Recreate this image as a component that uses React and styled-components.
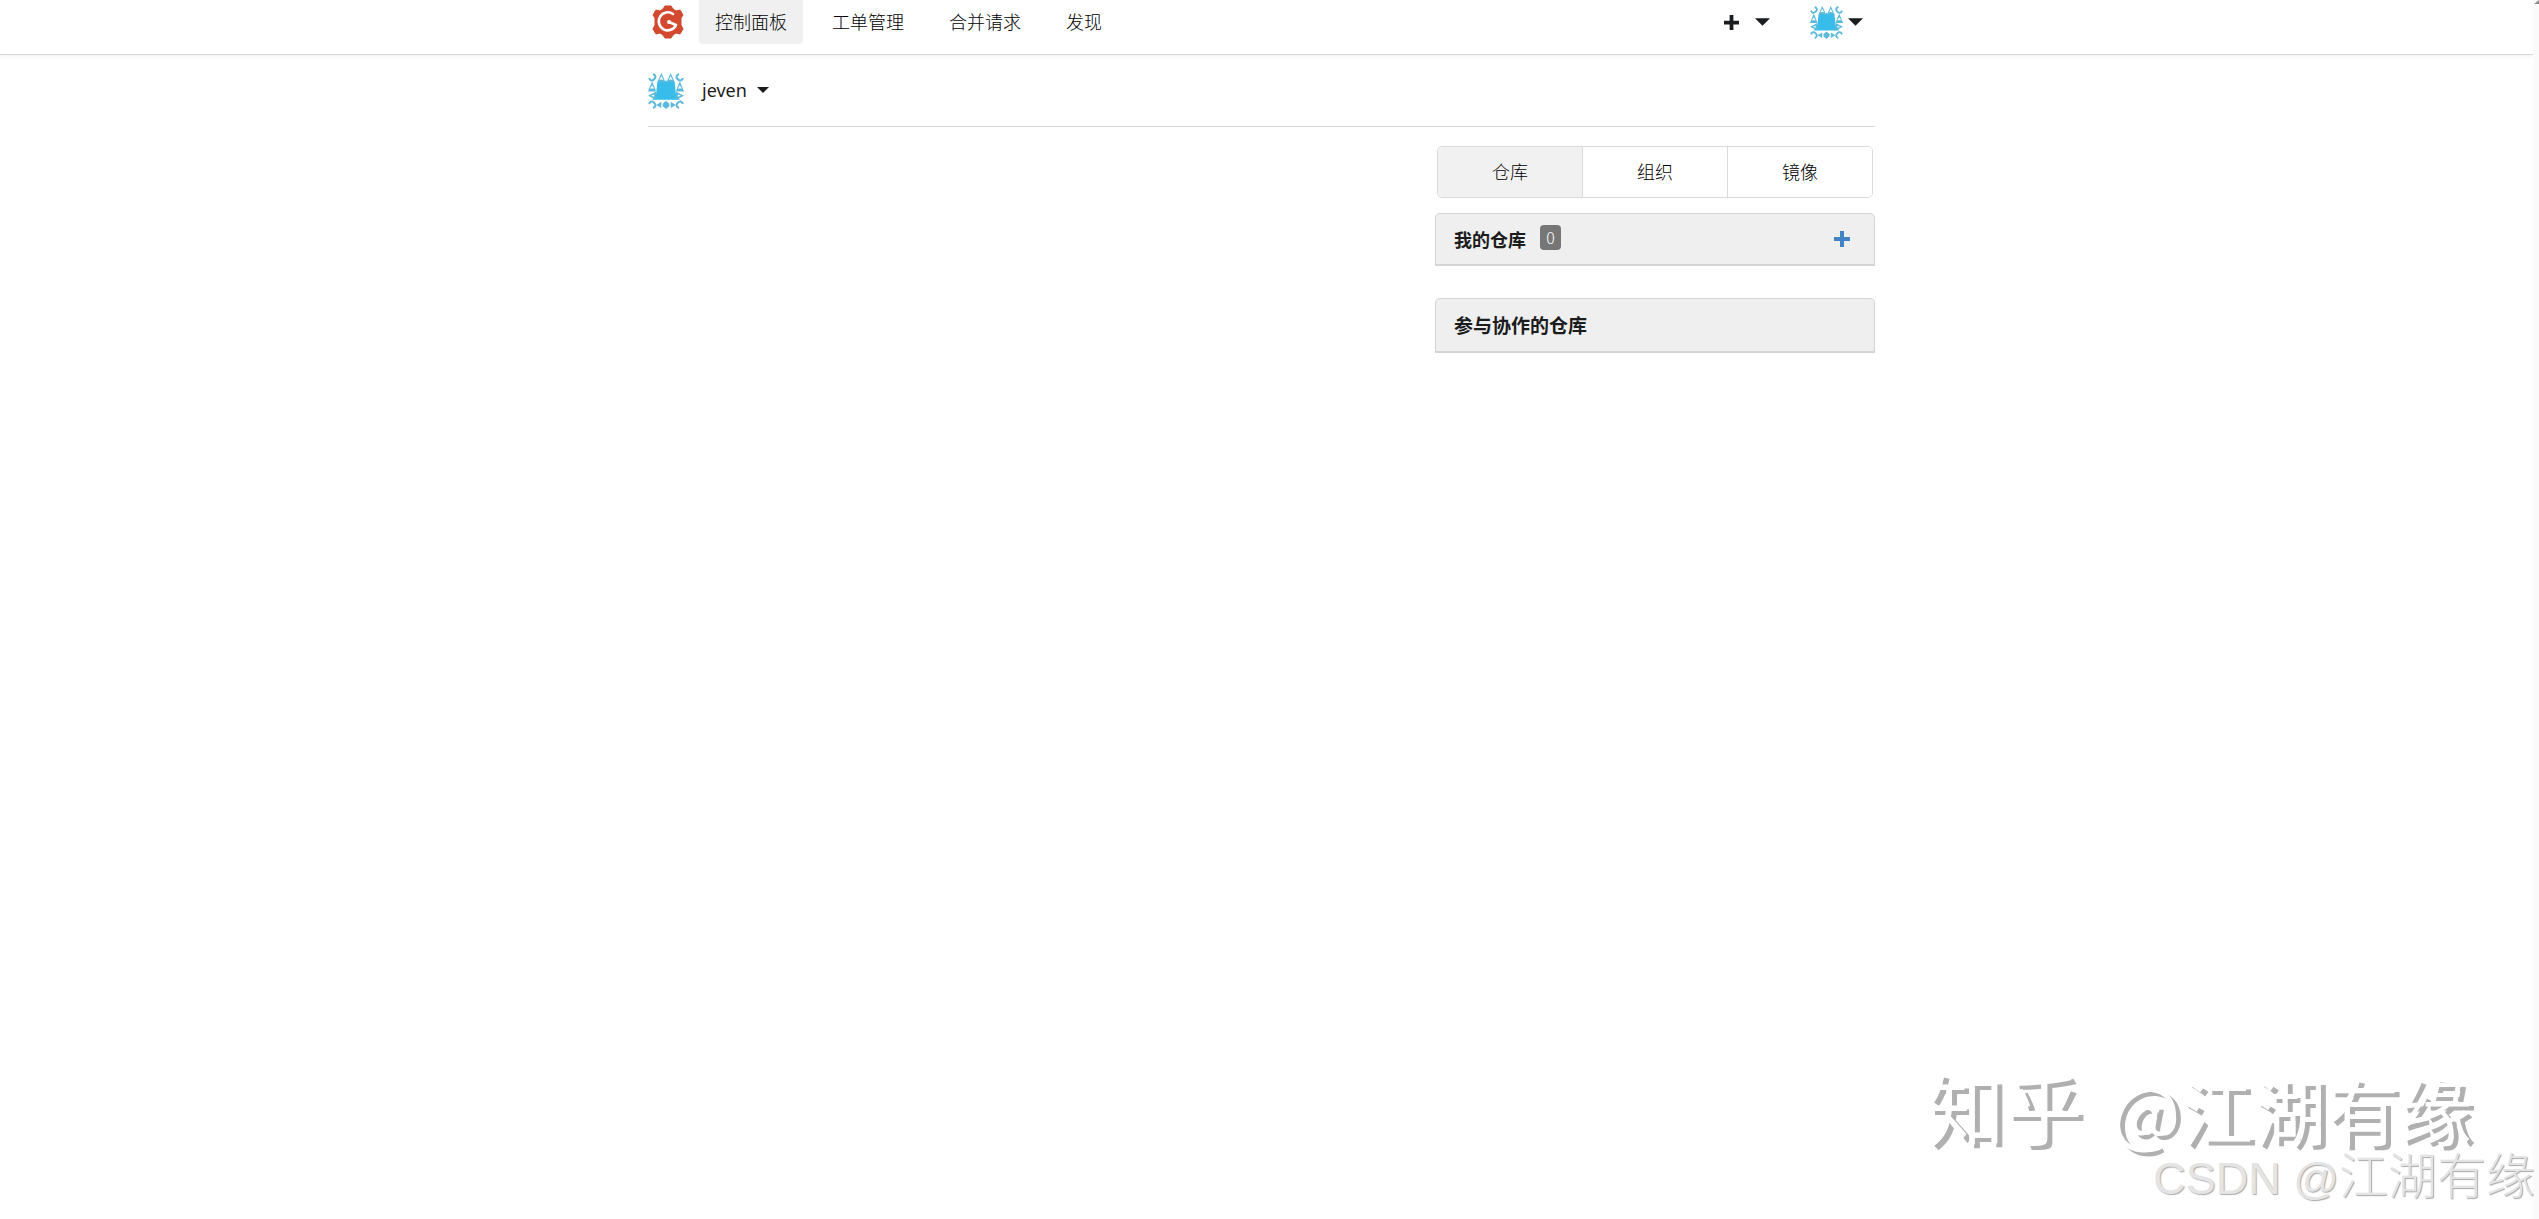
import { useState } from "react";
import styled, { createGlobalStyle } from "styled-components";

const GlobalStyle = createGlobalStyle`
  * {
    box-sizing: border-box;
  }

  body {
    margin: 0;
    background-color: #fff;
    color: #1b1c1d;
    font-family: "Noto Sans", "Noto Sans CJK SC", sans-serif;
    font-size: 18px;
    line-height: 24px;
  }

  button {
    padding: 0;
    border: none;
    background: none;
    color: inherit;
    font: inherit;
    cursor: pointer;
  }
`;

const Page = styled.div`
  position: relative;
  display: flex;
  min-height: 100vh;
  overflow: hidden;
`;

const Content = styled.div`
  flex: 1;
`;

const ScrollTrack = styled.div`
  width: 6px;
  background-color: #fafafa;

  svg {
    display: block;
  }
`;

const Header = styled.header`
  height: 55px;
  padding-right: 10px;
  border-bottom: 1px solid #d6d6d7;
  box-shadow: 0 2px 4px rgba(0, 0, 0, 0.05);
`;

const Container = styled.div`
  max-width: 1227px;
  margin: 0 auto;
`;

const Bar = styled(Container)`
  display: flex;
  align-items: center;
  height: 44px;
  padding: 0 12px 0 4px;
`;

const Logo = styled.a`
  display: flex;
  margin-right: 15px;
`;

const Nav = styled.nav`
  display: flex;
  flex: 1;
  gap: 13px;
`;

const NavLink = styled.a`
  height: 44px;
  padding: 0 16px;
  border-radius: 0 0 4px 4px;
  background-color: ${(props) => (props.$active ? "#f0f0f0" : "transparent")};
  color: #000;
  font-family: "Noto Sans CJK SC", sans-serif;
  font-weight: 300;
  line-height: 42px;
  text-decoration: none;
`;

const MenuButton = styled.button`
  display: flex;
  align-items: center;
  gap: ${(props) => props.$gap}px;

  & + & {
    margin-left: 40px;
  }
`;

const Main = styled.main`
  padding-right: 10px;
`;

const UserBar = styled.div`
  display: flex;
  align-items: center;
  height: 72px;
  border-bottom: 1px solid #d6d6d7;
`;

const UserButton = styled.button`
  display: flex;
  align-items: center;
  gap: 10px;
  margin-left: 18px;
  padding-bottom: 2px;
`;

const Sidebar = styled.aside`
  width: 440px;
  margin: 19px 0 0 auto;
`;

const Tabs = styled.div`
  display: flex;
  height: 52px;
  margin: 0 2px 15px;
  border: 1px solid #dadadb;
  border-radius: 5px;
  overflow: hidden;
`;

const Tab = styled.button`
  flex: 1;
  padding-bottom: 3px;
  background-color: ${(props) => (props.$active ? "#f1f1f1" : "#fff")};
  color: #000;
  font-family: "Noto Sans CJK SC", sans-serif;
  font-weight: 300;

  & + & {
    border-left: 1px solid #dadadb;
  }
`;

const Panel = styled.h2`
  display: flex;
  align-items: center;
  height: ${(props) => (props.$large ? 55 : 53)}px;
  margin: 0 0 32px;
  padding: 0 24px 1px 18px;
  border: 1px solid #d4d4d5;
  border-bottom-width: 2px;
  border-radius: 5px 5px 0 0;
  background-color: #efefef;
  font-family: "Noto Sans CJK SC", sans-serif;
  font-size: ${(props) => (props.$large ? 19 : 18)}px;
  font-weight: 700;
`;

const Badge = styled.span`
  width: 21px;
  height: 25px;
  margin: 0 0 2px 14px;
  border-radius: 4px;
  background-color: #767676;
  color: #fff;
  font-size: 16px;
  font-weight: 300;
  line-height: 24px;
  text-align: center;
`;

const AddLink = styled.a`
  display: flex;
  margin-left: auto;
  color: #4183c4;
`;

const Watermark = styled.div`
  position: absolute;
  font-family: "Noto Sans CJK SC", sans-serif;
  white-space: nowrap;
  pointer-events: none;
`;

const ZhihuMark = styled(Watermark)`
  right: 67px;
  bottom: 74px;
  color: #fff;
  font-size: 73px;
  font-weight: 400;
  line-height: 74px;
  text-shadow: 5px 4px 0 #b0b0b0;

  span {
    margin-right: 12px;
    font-size: 78px;
  }
`;

const CsdnMark = styled(Watermark)`
  right: 4px;
  bottom: 15px;
  color: #e4e4e4;
  font-size: 49px;
  font-weight: 300;
  line-height: 50px;
  text-shadow: 1px 1px 1px #aaa;

  span {
    font-family: "Liberation Sans", sans-serif;
    font-size: 45px;
  }
`;

function GogsLogo() {
  return (
    <svg width="32" height="34" viewBox="0 0 32 34" aria-hidden="true">
      <path
        d="M11 4L13 1H19L21 4L24 6L28 5L31 10L29 13V20L31 24L28 29L24 28L21 30L19 33H13L11 30L8 28L4 29L1 24L3 20V13L1 10L4 5L8 6Z"
        fill="#d2492f"
        stroke="#d2492f"
        strokeLinejoin="round"
      />
      <path
        d="M21 9A9 9 0 1 0 24 20L17 17"
        fill="none"
        stroke="#fff"
        strokeWidth="2.6"
        strokeLinecap="round"
        strokeLinejoin="round"
      />
      <circle cx="17" cy="17" r="2" fill="#fff" />
    </svg>
  );
}

function Identicon({ size }) {
  return (
    <svg width={size} height={size} viewBox="0 0 35 35" aria-hidden="true">
      <path
        d="M9 9L13 5L16 9L17.5 7L19 9L22 5L26 9L27 20L31 26H4L8 20Z"
        fill="#38bdeb"
      />
      <g fill="#5bb9dc">
        <path d="M13 0L17 9H9ZM22 0L26 9H18Z" />
        <path d="M4 8L8 18H0ZM31 8L35 18H27Z" />
        <path d="M0 22L8 18V26ZM35 22L27 18V26Z" />
        <path d="M8 31L13 28V34ZM27 31L22 28V34ZM17.5 27L22 31L17.5 35L13 31Z" />
      </g>
      <g fill="#fff">
        <path d="M13 3L15 7L13 6L11 7ZM22 3L24 7L22 6L20 7Z" />
        <path d="M4 12L6 15H2ZM31 12L33 15H29ZM3 22L6 21V23ZM32 22L29 21V23Z" />
        <path d="M13 30L15 31L13 32ZM22 30L20 31L22 32Z" />
      </g>
      <g fill="none" stroke="#5bb9dc" strokeWidth="2">
        <path d="M5 1Q9 3 6 6Q3 9 1 5M30 1Q26 3 29 6Q32 9 34 5" />
        <path d="M1 30Q3 26 6 29Q9 32 5 34M34 30Q32 26 29 29Q26 32 30 34" />
      </g>
    </svg>
  );
}

function Caret({ width }) {
  return (
    <svg width={width} height="8" viewBox="0 0 16 8" aria-hidden="true">
      <path d="M0 0H16L8 8Z" fill="currentColor" />
    </svg>
  );
}

function Plus({ size }) {
  return (
    <svg width={size} height={size} viewBox="0 0 16 16" aria-hidden="true">
      <path d="M6 0H10V6H16V10H10V16H6V10H0V6H6Z" fill="currentColor" />
    </svg>
  );
}

const navItems = ["控制面板", "工单管理", "合并请求", "发现"];
const tabItems = ["仓库", "组织", "镜像"];

function App() {
  const [tab, setTab] = useState("仓库");

  return (
    <Page>
      <GlobalStyle />
      <Content>
        <Header>
          <Bar>
            <Logo href="#" aria-label="Gogs">
              <GogsLogo />
            </Logo>
            <Nav>
              {navItems.map((item, index) => (
                <NavLink key={item} href="#" $active={index === 0}>
                  {item}
                </NavLink>
              ))}
            </Nav>
            <MenuButton type="button" aria-label="创建" $gap={16}>
              <Plus size={15} />
              <Caret width={15} />
            </MenuButton>
            <MenuButton type="button" aria-label="用户" $gap={5}>
              <Identicon size={33} />
              <Caret width={15} />
            </MenuButton>
          </Bar>
        </Header>
        <Main>
          <Container>
            <UserBar>
              <Identicon size={36} />
              <UserButton type="button">
                jeven
                <Caret width={12} />
              </UserButton>
            </UserBar>
            <Sidebar>
              <Tabs>
                {tabItems.map((item) => (
                  <Tab
                    key={item}
                    type="button"
                    $active={tab === item}
                    onClick={() => setTab(item)}
                  >
                    {item}
                  </Tab>
                ))}
              </Tabs>
              <Panel>
                我的仓库
                <Badge>0</Badge>
                <AddLink href="#" aria-label="创建仓库">
                  <Plus size={16} />
                </AddLink>
              </Panel>
              <Panel $large>参与协作的仓库</Panel>
            </Sidebar>
          </Container>
        </Main>
      </Content>
      <ScrollTrack>
        <svg width="6" height="4" viewBox="0 0 6 4" aria-hidden="true">
          <path d="M6 0V4H1Z" fill="#8a8a8a" />
        </svg>
      </ScrollTrack>
      <ZhihuMark>
        <span>知乎</span> @江湖有缘
      </ZhihuMark>
      <CsdnMark>
        <span>CSDN @</span>江湖有缘
      </CsdnMark>
    </Page>
  );
}

export default App;
